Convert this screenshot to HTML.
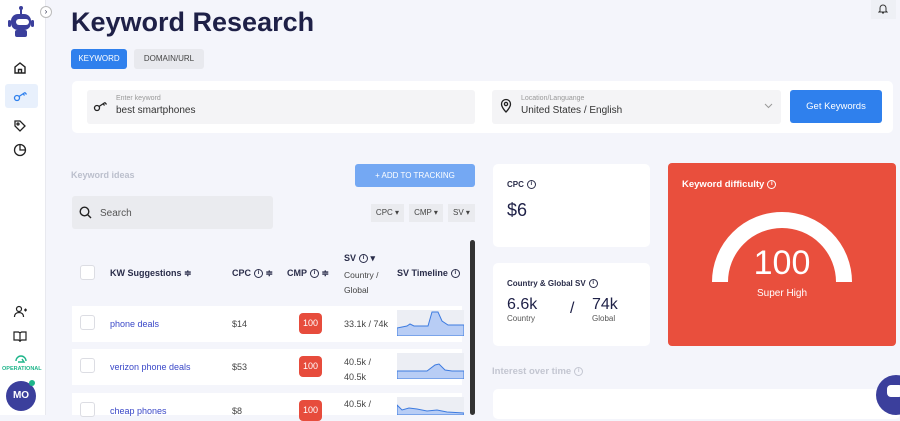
<!DOCTYPE html>
<html><head><style>
*{box-sizing:border-box;margin:0;padding:0}
body{width:900px;height:415px;overflow:hidden;background:#f4f5fb;font-family:"Liberation Sans",sans-serif;position:relative;color:#2a2d4a}
.a{position:absolute}
.side{left:0;top:0;width:46px;height:415px;background:#fff;border-right:1px solid #e8e9ef}
.card{background:#fff;border-radius:5px}
.info{display:inline-block;width:9px;height:9px;border:1px solid currentColor;border-radius:50%;font-size:6px;line-height:7px;text-align:center;vertical-align:middle;margin-left:3px}
.th{font-size:9px;font-weight:bold;color:#2a2d4a}
.row{left:72px;width:390px;height:36px;background:#fff}
.cb{width:15px;height:15px;border:1px solid #dcdde3;border-radius:3px;background:#fff}
.lnk{color:#3a48c8;font-size:9px}
.badge{width:23px;height:21px;background:#e74c3c;color:#fff;font-size:9px;border-radius:4px;text-align:center;line-height:21px}
.sm{font-size:9px;color:#444}
</style></head><body>
<div class="a side">
 <svg class="a" style="left:7px;top:5px" width="28" height="34" viewBox="0 0 28 34"><circle cx="14" cy="3" r="2" fill="#3b3f9c"/><rect x="13" y="4" width="2" height="5" fill="#3b3f9c"/><rect x="4" y="9" width="20" height="16" rx="7" fill="#3b3f9c"/><rect x="9" y="14" width="13" height="6" rx="3" fill="#fff"/><rect x="1" y="15" width="3" height="7" rx="1.5" fill="#3b3f9c"/><rect x="24" y="15" width="3" height="7" rx="1.5" fill="#3b3f9c"/><rect x="8" y="25" width="12" height="7" rx="2" fill="#3b3f9c"/></svg>
 <svg class="a" style="left:13px;top:61px" width="14" height="14" viewBox="0 0 14 14" fill="none" stroke="#222" stroke-width="1.4"><path d="M2 6L7 2l5 4v6H2z"/><path d="M5.5 12V8.5h3V12"/></svg>
 <div class="a" style="left:5px;top:84px;width:33px;height:24px;background:#e8f0fc;border-radius:3px"></div>
 <svg class="a" style="left:13px;top:89px" width="16" height="14" viewBox="0 0 16 14" fill="none" stroke="#2f80ed" stroke-width="1.3"><circle cx="4" cy="9" r="2.5"/><path d="M6 7.5l6-4M10 4.5l1.5 2M12 3.5l1.5 2"/></svg>
 <svg class="a" style="left:13px;top:119px" width="14" height="14" viewBox="0 0 14 14" fill="none" stroke="#222" stroke-width="1.3"><path d="M2 2h5l5 5-5 5-5-5z"/><circle cx="5" cy="5" r="1"/></svg>
 <svg class="a" style="left:13px;top:143px" width="14" height="14" viewBox="0 0 14 14" fill="none" stroke="#222" stroke-width="1.3"><circle cx="7" cy="7" r="5.5"/><path d="M7 1.5V7h5.5"/></svg>
 <svg class="a" style="left:13px;top:305px" width="15" height="14" viewBox="0 0 15 14" fill="none" stroke="#222" stroke-width="1.2"><circle cx="6" cy="4" r="2.5"/><path d="M1.5 12c0-3 2-4.5 4.5-4.5S10.5 9 10.5 12M11 5h3M12.5 3.5v3"/></svg>
 <svg class="a" style="left:13px;top:330px" width="14" height="12" viewBox="0 0 14 12" fill="none" stroke="#222" stroke-width="1.2"><path d="M1 2h4.5L7 3v8L5.5 10H1zM13 2H8.5L7 3v8l1.5-1H13z"/></svg>
 <svg class="a" style="left:14px;top:352px" width="14" height="12" viewBox="0 0 14 12" fill="none" stroke="#1fb58a" stroke-width="1.4"><path d="M2 9a5 5 0 1 1 10 0M4 10h6l-2-3"/></svg>
 <div class="a" style="left:2px;top:366px;font-size:5.5px;font-weight:bold;color:#1fb58a">OPERATIONAL</div>
 <div class="a" style="left:6px;top:381px;width:30px;height:30px;border-radius:50%;background:#3b3f9c;color:#fff;font-size:10px;font-weight:bold;text-align:center;line-height:30px">MO</div>
 <div class="a" style="left:29px;top:380px;width:6px;height:6px;border-radius:50%;background:#1fb58a"></div>
</div>
<div class="a" style="left:40px;top:6px;width:12px;height:12px;border-radius:50%;background:#fff;border:1px solid #bbb;font-size:8px;line-height:10px;text-align:center">›</div>
<div class="a" style="left:71px;top:7px;font-size:27px;font-weight:bold;color:#1e2047">Keyword Research</div>
<div class="a" style="left:871px;top:0;width:25px;height:19px;background:#eef0f5"></div>
<svg class="a" style="left:878px;top:3px" width="10" height="11" viewBox="0 0 10 11" fill="none" stroke="#333" stroke-width="1"><path d="M2 8V5a3 3 0 0 1 6 0v3l1 1H1zM4 10h2"/></svg>
<div class="a" style="left:71px;top:49px;width:56px;height:20px;background:#2f80ed;border-radius:3px;color:#fff;font-size:8px;text-align:center;line-height:20px">KEYWORD</div>
<div class="a" style="left:134px;top:49px;width:70px;height:20px;background:#e8e9ee;border-radius:3px;color:#444;font-size:8px;text-align:center;line-height:20px">DOMAIN/URL</div>
<div class="a card" style="left:72px;top:81px;width:821px;height:52px"></div>
<div class="a" style="left:87px;top:90px;width:388px;height:34px;background:#f4f4f6;border-radius:3px"></div>
<svg class="a" style="left:93px;top:99px" width="16" height="14" viewBox="0 0 16 14" fill="none" stroke="#222" stroke-width="1.3"><circle cx="4" cy="9" r="2.5"/><path d="M6 7.5l6-4M10 4.5l1.5 2M12 3.5l1.5 2"/></svg>
<div class="a" style="left:116px;top:95px;font-size:7px;color:#999">Enter keyword</div>
<div class="a" style="left:116px;top:105px;font-size:10px;color:#333">best smartphones</div>
<div class="a" style="left:492px;top:90px;width:289px;height:34px;background:#f4f4f6;border-radius:3px"></div>
<svg class="a" style="left:500px;top:98px" width="12" height="15" viewBox="0 0 12 15" fill="none" stroke="#222" stroke-width="1.3"><path d="M6 14s-4.5-4.5-4.5-8a4.5 4.5 0 0 1 9 0c0 3.5-4.5 8-4.5 8z"/><circle cx="6" cy="6" r="1.6"/></svg>
<div class="a" style="left:521px;top:95px;font-size:7px;color:#999">Location/Languange</div>
<div class="a" style="left:521px;top:105px;font-size:10px;color:#333">United States / English</div>
<svg class="a" style="left:764px;top:103px" width="9" height="6" viewBox="0 0 9 6" fill="none" stroke="#999"><path d="M1 1l3.5 3.5L8 1"/></svg>
<div class="a" style="left:790px;top:90px;width:92px;height:33px;background:#2f80ed;border-radius:3px;color:#fff;font-size:9.5px;text-align:center;line-height:33px">Get Keywords</div>

<div class="a" style="left:71px;top:170px;font-size:9px;font-weight:bold;color:#bbbfcc">Keyword ideas</div>
<div class="a" style="left:355px;top:164px;width:120px;height:23px;background:#74a8f3;border-radius:3px;color:#fff;font-size:8px;text-align:center;line-height:23px">+ ADD TO TRACKING</div>
<div class="a" style="left:72px;top:196px;width:201px;height:33px;background:#eaebef;border-radius:3px"></div>
<svg class="a" style="left:79px;top:206px" width="13" height="13" viewBox="0 0 13 13" fill="none" stroke="#222" stroke-width="1.4"><circle cx="5.5" cy="5.5" r="4.3"/><path d="M8.6 8.6L12 12"/></svg>
<div class="a" style="left:100px;top:208px;font-size:10px;color:#555">Search</div>
<div class="a" style="left:371px;top:204px;width:33px;height:18px;background:#eaebef;font-size:8px;color:#444;text-align:center;line-height:18px">CPC ▾</div>
<div class="a" style="left:409px;top:204px;width:34px;height:18px;background:#eaebef;font-size:8px;color:#444;text-align:center;line-height:18px">CMP ▾</div>
<div class="a" style="left:448px;top:204px;width:27px;height:18px;background:#eaebef;font-size:8px;color:#444;text-align:center;line-height:18px">SV ▾</div>

<div class="a cb" style="left:80px;top:265px"></div>
<div class="a th" style="left:110px;top:268px">KW Suggestions ≑</div>
<div class="a th" style="left:232px;top:268px">CPC<span class="info">i</span> ≑</div>
<div class="a th" style="left:287px;top:268px">CMP<span class="info">i</span> ≑</div>
<div class="a th" style="left:344px;top:253px">SV<span class="info">i</span> ▾</div>
<div class="a" style="left:344px;top:268px;font-size:8.5px;line-height:15px;color:#444">Country /<br>Global</div>
<div class="a th" style="left:397px;top:268px">SV Timeline<span class="info">i</span></div>
<div class="a" style="left:470px;top:240px;width:5px;height:175px;background:#333;border-radius:3px"></div>

<div class="a row" style="top:306px"></div>
<div class="a cb" style="left:80px;top:315px"></div>
<div class="a lnk" style="left:110px;top:319px">phone deals</div>
<div class="a sm" style="left:232px;top:319px">$14</div>
<div class="a badge" style="left:299px;top:313px">100</div>
<div class="a sm" style="left:344px;top:319px">33.1k / 74k</div>
<svg class="a" style="left:397px;top:310px" width="67" height="26"><rect width="67" height="26" fill="#eceef4"/><path d="M0 18L10 16 13 14 17 16H31L35 2H41L45 11 51 15H67V26H0Z" fill="#b8cdf5" stroke="#3d7be0" stroke-width="1"/></svg>

<div class="a row" style="top:349px"></div>
<div class="a cb" style="left:80px;top:358px"></div>
<div class="a lnk" style="left:110px;top:362px">verizon phone deals</div>
<div class="a sm" style="left:232px;top:362px">$53</div>
<div class="a badge" style="left:299px;top:356px">100</div>
<div class="a sm" style="left:344px;top:355px;line-height:15px">40.5k /<br>40.5k</div>
<svg class="a" style="left:397px;top:353px" width="67" height="26"><rect width="67" height="26" fill="#eceef4"/><path d="M0 18H30L38 12 42 11 48 17 55 18H67V26H0Z" fill="#b8cdf5" stroke="#3d7be0" stroke-width="1"/></svg>

<div class="a row" style="top:393px;height:22px"></div>
<div class="a cb" style="left:80px;top:402px"></div>
<div class="a lnk" style="left:110px;top:406px">cheap phones</div>
<div class="a sm" style="left:232px;top:406px">$8</div>
<div class="a badge" style="left:299px;top:400px">100</div>
<div class="a sm" style="left:344px;top:399px">40.5k /</div>
<svg class="a" style="left:397px;top:397px" width="67" height="18"><rect width="67" height="18" fill="#eceef4"/><path d="M0 8L5 13 12 11 20 12 30 14 40 13 50 15 67 16V18H0Z" fill="#b8cdf5" stroke="#3d7be0" stroke-width="1"/></svg>

<div class="a card" style="left:493px;top:164px;width:157px;height:83px"></div>
<div class="a" style="left:507px;top:180px;font-size:8px;font-weight:bold">CPC<span class="info">i</span></div>
<div class="a" style="left:507px;top:200px;font-size:18px;color:#1e2047">$6</div>
<div class="a card" style="left:493px;top:263px;width:157px;height:83px"></div>
<div class="a" style="left:507px;top:279px;font-size:8px;font-weight:bold">Country &amp; Global SV<span class="info">i</span></div>
<div class="a" style="left:507px;top:296px;font-size:16px;color:#1e2047">6.6k</div>
<div class="a" style="left:507px;top:314px;font-size:8px;color:#555">Country</div>
<div class="a" style="left:570px;top:300px;font-size:16px;color:#1e2047">/</div>
<div class="a" style="left:592px;top:296px;font-size:16px;color:#1e2047">74k</div>
<div class="a" style="left:592px;top:314px;font-size:8px;color:#555">Global</div>

<div class="a" style="left:668px;top:163px;width:228px;height:183px;background:#e94f3d;border-radius:4px"></div>
<div class="a" style="left:682px;top:179px;font-size:9.5px;font-weight:bold;color:#fff">Keyword difficulty<span class="info">i</span></div>
<svg class="a" style="left:712px;top:212px" width="140" height="70"><path d="M8 70A62 62 0 0 1 132 70" fill="none" stroke="#fff" stroke-width="16"/></svg>
<div class="a" style="left:668px;top:244px;width:228px;text-align:center;font-size:34px;color:#fff">100</div>
<div class="a" style="left:668px;top:288px;width:228px;text-align:center;font-size:10px;color:#fff">Super High</div>

<div class="a" style="left:492px;top:366px;font-size:9.5px;font-weight:bold;color:#c3c6d1">Interest over time<span class="info">i</span></div>
<div class="a card" style="left:493px;top:389px;width:407px;height:30px"></div>
<div class="a" style="left:876px;top:375px;width:40px;height:40px;border-radius:50%;background:#3b3f9c"></div>
<div class="a" style="left:887px;top:385px;width:16px;height:12px;background:#fff;border-radius:4px"></div>
</body></html>
